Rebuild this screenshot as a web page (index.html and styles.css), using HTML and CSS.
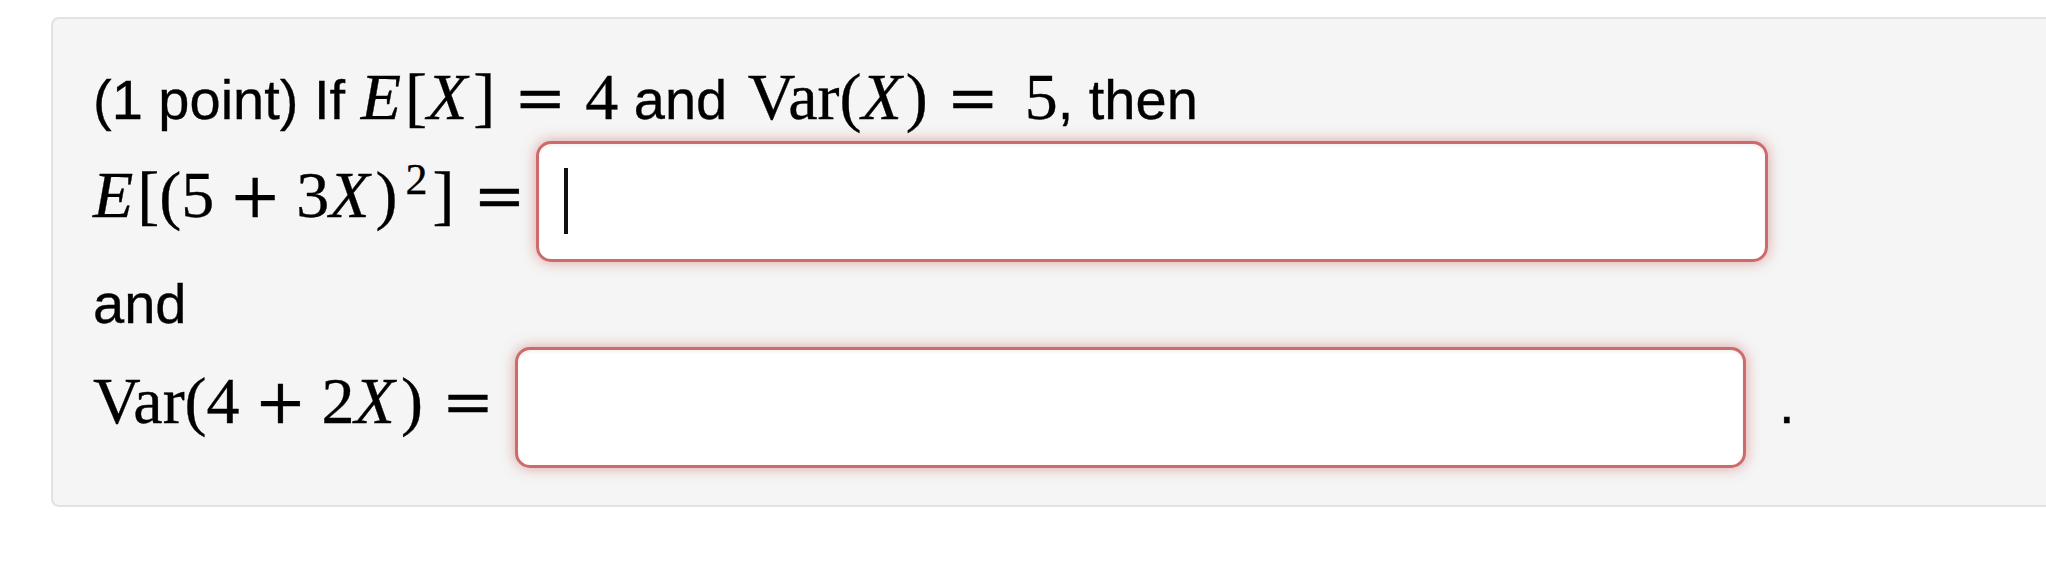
FILE: index.html
```html
<!DOCTYPE html>
<html lang="en">
<head>
    <meta charset="UTF-8">
    <meta name="viewport" content="width=device-width, initial-scale=1.0">
    <title>Problem</title>
    <link rel="stylesheet" href="styles.css">
</head>
<body>
    <div class="problem">
        <div class="line">(1 point) If <span class="math"><i>E</i>[<i>X</i>]<span class="rel">=</span>4</span> and <span class="math gap">Var(<i>X</i>)<span class="rel wide">=</span>5</span>, then</div>

        <div class="line">
            <span class="math"><i>E</i>[(5<span class="bin">+</span>3<i>X</i>)<sup>2</sup>]<span class="rel end">=</span></span>
            <span class="answer">
                <input type="text" class="answer-input" aria-label="answer 1">
                <span class="caret"></span>
            </span>
        </div>

        <div class="line">and</div>

        <div class="line last">
            <span class="math">Var(4<span class="bin">+</span>2<i>X</i>)<span class="rel end">=</span></span>
            <span class="answer">
                <input type="text" class="answer-input short" aria-label="answer 2">
            </span> .
        </div>
    </div>
</body>
</html>
```

FILE: styles.css
```css
:root {
    --panel: #f5f5f5;
    --panel-border: #e2e2e2;
    --wrong: #cd6b6b;
    --text: #000;
}

html, body {
    overflow: hidden;
}

body {
    margin: 0;
    background: #fff;
    color: var(--text);
    font-family: 'Liberation Sans', Arial, sans-serif;
    font-size: 56px;
    -webkit-text-stroke: 0.35px currentColor;
}

.problem {
    margin: 17px -40px 0 51px;
    padding: 43px 40px 30px 40px;
    background: var(--panel);
    border: 2px solid var(--panel-border);
    border-radius: 8px;
}

.line {
    line-height: 70px;
    white-space: nowrap;
}

.last {
    padding-top: 2px;
}

.math {
    font-family: 'Liberation Serif', 'Times New Roman', serif;
    font-size: 66px;
}

.math.gap {
    margin-left: 5px;
}

.math i {
    font-style: italic;
    margin-right: 6px;
}

.math i:first-child {
    margin-right: 4px;
}

.math sup {
    font-size: 44px;
    line-height: 0;
    vertical-align: 23px;
    margin: 0 5px 0 8px;
}

.rel,
.bin {
    font-family: 'DejaVu Serif', serif;
    font-size: 62px;
}

.rel {
    margin: 0 19px;
}

.rel.wide {
    margin-right: 26px;
}

.rel.end {
    margin-right: -5px;
}

.last .rel.end {
    margin-right: 6px;
}

.bin {
    margin: 0 15px;
}

.answer {
    position: relative;
    display: inline-block;
    vertical-align: middle;
    margin: 6px 17px 7px 0;
}

.answer-input {
    display: block;
    box-sizing: border-box;
    width: 1232px;
    height: 121px;
    margin: 0;
    padding: 0 27px;
    border: 3px solid var(--wrong);
    border-radius: 15px;
    background: #fff;
    box-shadow: 0 0 14px rgba(200, 80, 80, 0.5), inset 0 2px 3px rgba(0, 0, 0, 0.06);
    font: inherit;
    outline: none;
}

.answer-input.short {
    width: 1231px;
}

/* text cursor shown in the focused field */
.caret {
    position: absolute;
    left: 28px;
    top: 27px;
    width: 4px;
    height: 66px;
    background: #111;
}
```
